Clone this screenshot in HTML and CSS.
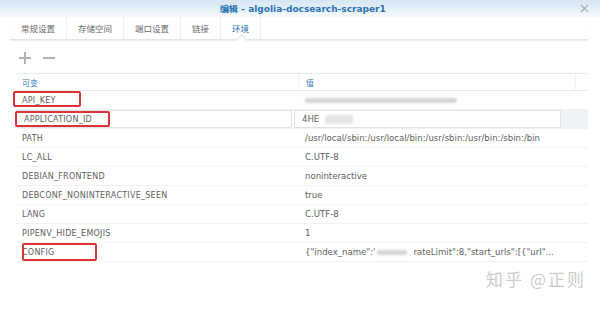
FILE: index.html
```html
<!DOCTYPE html>
<html lang="zh">
<head>
    <meta charset="UTF-8">
    <meta name="viewport" content="width=device-width, initial-scale=1.0">
    <title>编辑 - algolia-docsearch-scraper1</title>
    <link rel="stylesheet" href="styles.css">
</head>
<body>
    <div class="window">
        <div class="titlebar">
            <span class="title">编辑 - algolia-docsearch-scraper1</span>
            <svg class="close" width="9" height="9" viewBox="0 0 9 9"><path d="M1 1l7 7M8 1l-7 7" stroke="#a3acb4" stroke-width="1.1"/></svg>
        </div>
        <div class="tabs">
            <div class="tab">常规设置</div>
            <div class="tab">存储空间</div>
            <div class="tab">端口设置</div>
            <div class="tab">链接</div>
            <div class="tab active">环境</div>
        </div>
        <div class="toolbar">
            <svg class="tool" width="14" height="14" viewBox="0 0 14 14"><path d="M7 1v12M1 7h12" stroke="#b3b3b3" stroke-width="2"/></svg>
            <svg class="tool" width="14" height="14" viewBox="0 0 14 14"><path d="M1 7h12" stroke="#b3b3b3" stroke-width="2"/></svg>
        </div>
        <div class="grid">
            <div class="row head">
                <div class="cell key">可变</div>
                <div class="cell val">值</div>
                <div class="cell pad"></div>
            </div>
            <div class="row">
                <div class="cell key"><span class="mark mark-api"></span>API_KEY</div>
                <div class="cell val"><span class="blur blur-long"></span></div>
                <div class="cell pad"></div>
            </div>
            <div class="row editing">
                <div class="cell key"><span class="box">APPLICATION_ID</span><span class="mark mark-app"></span></div>
                <div class="cell val"><span class="box">4HE<span class="blur blur-short"></span></span></div>
                <div class="cell pad"></div>
            </div>
            <div class="row">
                <div class="cell key">PATH</div>
                <div class="cell val">/usr/local/sbin:/usr/local/bin:/usr/sbin:/usr/bin:/sbin:/bin</div>
                <div class="cell pad"></div>
            </div>
            <div class="row">
                <div class="cell key">LC_ALL</div>
                <div class="cell val">C.UTF-8</div>
                <div class="cell pad"></div>
            </div>
            <div class="row">
                <div class="cell key">DEBIAN_FRONTEND</div>
                <div class="cell val">noninteractive</div>
                <div class="cell pad"></div>
            </div>
            <div class="row">
                <div class="cell key">DEBCONF_NONINTERACTIVE_SEEN</div>
                <div class="cell val">true</div>
                <div class="cell pad"></div>
            </div>
            <div class="row">
                <div class="cell key">LANG</div>
                <div class="cell val">C.UTF-8</div>
                <div class="cell pad"></div>
            </div>
            <div class="row">
                <div class="cell key">PIPENV_HIDE_EMOJIS</div>
                <div class="cell val">1</div>
                <div class="cell pad"></div>
            </div>
            <div class="row">
                <div class="cell key"><span class="mark mark-config"></span>CONFIG</div>
                <div class="cell val">{"index_name":'<span class="blur blur-mid"></span>rateLimit":8,"start_urls":[{"url"...</div>
                <div class="cell pad"></div>
            </div>
        </div>
        <div class="watermark">知乎 @正则</div>
    </div>
</body>
</html>
```

FILE: styles.css
```css
body {
    margin: 0;
    background: #ffffff;
    font-family: "DejaVu Sans", Verdana, sans-serif;
    font-size: 8px;
    color: #5e5e5e;
}
.window {
    position: relative;
    width: 600px;
    height: 312px;
    overflow: hidden;
}
.titlebar {
    height: 18px;
    background: linear-gradient(#d6e6f4, #f7fafd);
    display: flex;
    align-items: center;
    justify-content: center;
    position: relative;
}
.title {
    font-weight: bold;
    font-size: 9px;
    color: #2c73b3;
    margin-left: 6px;
}
.close {
    position: absolute;
    right: 11px;
    top: 4px;
}
.tabs {
    display: flex;
    height: 21px;
    margin: 0 12px 0 10px;
    border-bottom: 1px solid #e2e6ea;
    box-shadow: 0 1px 1px #eceff2;
}
.tab {
    padding: 0 11px;
    line-height: 21px;
    font-family: "Noto Sans CJK SC", sans-serif;
    font-size: 8.5px;
    color: #6a6a6a;
    border-right: 1px solid #edeff1;
    position: relative;
}
.tab.active {
    color: #2c73b3;
}
.tab.active::after {
    content: "";
    position: absolute;
    left: 50%;
    bottom: -1px;
    width: 6px;
    height: 6px;
    margin-left: -3px;
    background: #fff;
    border-left: 1px solid #dfe3e7;
    border-top: 1px solid #dfe3e7;
    transform: rotate(45deg) translate(2px, 2px);
}
.toolbar {
    display: flex;
    gap: 10px;
    padding: 11px 0 0 18px;
    height: 22px;
}
.grid {
    margin: 0 12px 0 16px;
}
.row {
    display: flex;
    height: 19px;
    border-bottom: 1px solid #f0f1f2;
    box-sizing: border-box;
}
.row.head {
    height: 18px;
    border-top: 1px solid #e8eaec;
    border-bottom: 1px solid #e8eaec;
}
.cell {
    display: flex;
    align-items: center;
    padding-left: 6px;
    position: relative;
    white-space: nowrap;
}
.key {
    width: 276px;
    letter-spacing: 0.25px;
}
.val {
    width: 269px;
    padding-left: 7px;
    border-left: 1px solid #eef0f2;
    font-size: 8.55px;
}
.pad {
    flex: 1;
    padding: 0;
    border-left: 1px solid #eef0f2;
}
.row:not(.head) .val,
.row:not(.head) .pad {
    border-left: none;
}
.head .cell {
    color: #3c82c4;
    font-family: "Noto Sans CJK SC", sans-serif;
    font-size: 8px;
    letter-spacing: 0;
}
.editing .cell {
    padding-left: 0;
}
.editing .box {
    display: flex;
    align-items: center;
    height: 18px;
    width: 100%;
    box-sizing: border-box;
    padding-left: 7px;
    border: 1px solid #dfe3e6;
    background: #fff;
}
.editing .val .box {
    width: 268px;
    margin-left: 2px;
}
.editing .pad {
    background: #eef3f8;
}
.blur {
    display: inline-block;
    height: 5px;
    background: #d6d6d6;
    border-radius: 2px;
    filter: blur(1px);
}
.blur-long {
    width: 152px;
}
.blur-short {
    width: 28px;
    height: 9px;
    margin-left: 6px;
    background: #e4e4e4;
}
.blur-mid {
    width: 30px;
    height: 5px;
    margin: 0 6px 0 2px;
}
.mark {
    position: absolute;
    border: 2px solid #d9343a;
    border-radius: 2px;
    box-sizing: border-box;
}
.mark-api {
    left: -3px;
    top: 0;
    width: 68px;
    height: 16px;
}
.mark-app {
    left: -1px;
    top: 1px;
    width: 95px;
    height: 16px;
}
.mark-config {
    left: 6px;
    top: 0;
    width: 75px;
    height: 18px;
}
.watermark {
    position: absolute;
    right: 14px;
    top: 266px;
    font-family: "Noto Sans CJK SC", sans-serif;
    font-size: 17px;
    color: #cbcbcb;
    letter-spacing: 2px;
}
```
